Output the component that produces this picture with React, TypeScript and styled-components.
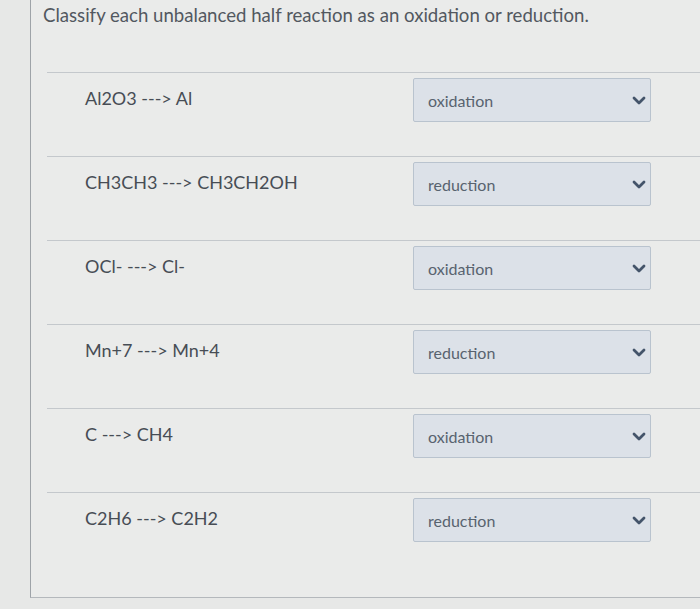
import React from 'react'
import styled, { createGlobalStyle } from 'styled-components'

const GlobalStyle = createGlobalStyle`
  html, body {
    margin: 0;
    padding: 0;
    background: #e7e8e7;
  }
  body {
    font-family: Lato, "Open Sans", sans-serif;
    width: 700px;
    height: 609px;
    overflow: hidden;
  }
`

const Panel = styled.div`
  margin-left: 30px;
  height: 598px;
  border-left: 1px solid #9ea3a8;
  border-bottom: 1px solid #b4b8bc;
  background: #eaebea;
  box-sizing: border-box;
  padding-left: 12px;
  padding-top: 4px;
`

const Title = styled.div`
  font-size: 18.6px;
  line-height: 22px;
  color: #525860;
`

const List = styled.div`
  margin-top: 46px;
  margin-left: 4px;
`

const Row = styled.div`
  display: flex;
  align-items: flex-start;
  height: 83px;
  border-top: 1px solid #c4c8cc;
  padding-left: 38px;
`

const Reaction = styled.div`
  width: 328px;
  padding-top: 14px;
  font-size: 18px;
  line-height: 22px;
  color: #474d55;
`

const Select = styled.div`
  margin-top: 5px;
  width: 238px;
  height: 44px;
  box-sizing: border-box;
  display: flex;
  align-items: center;
  justify-content: space-between;
  padding: 0 4px 0 14px;
  background: #dce1e8;
  border: 1px solid #b9c3ce;
  border-radius: 2px;
  font-size: 16px;
  color: #58636f;
`

const Chevron = () => (
  <svg width="14" height="9" viewBox="0 0 14 9">
    <path d="M2 2 L7 7 L12 2" fill="none" stroke="#44546a" strokeWidth="2.8" strokeLinecap="round" strokeLinejoin="round" />
  </svg>
)

const rows = [
  ['Al2O3 ---> Al', 'oxidation'],
  ['CH3CH3 ---> CH3CH2OH', 'reduction'],
  ['OCl- ---> Cl-', 'oxidation'],
  ['Mn+7 ---> Mn+4', 'reduction'],
  ['C ---> CH4', 'oxidation'],
  ['C2H6 ---> C2H2', 'reduction'],
]

export default function App() {
  return (
    <>
      <GlobalStyle />
      <Panel>
        <Title>Classify each unbalanced half reaction as an oxidation or reduction.</Title>
        <List>
          {rows.map(([reaction, answer]) => (
            <Row key={reaction}>
              <Reaction>{reaction}</Reaction>
              <Select>
                <span>{answer}</span>
                <Chevron />
              </Select>
            </Row>
          ))}
        </List>
      </Panel>
    </>
  )
}
